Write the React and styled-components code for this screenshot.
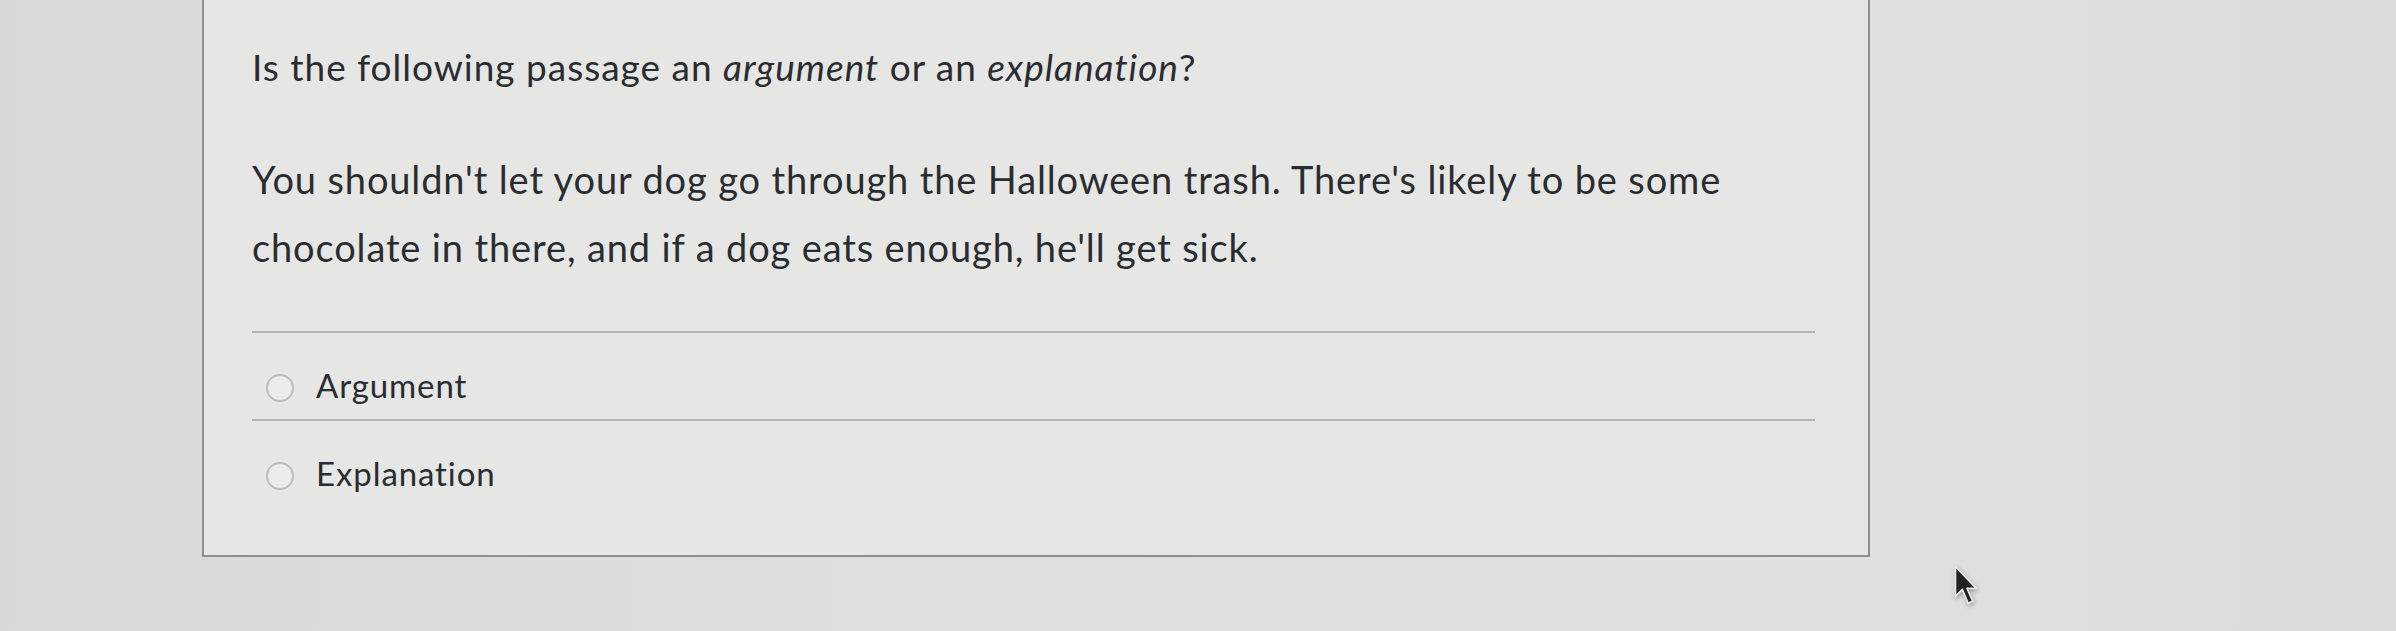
import React from "react";
import styled, { createGlobalStyle } from "styled-components";

const Global = createGlobalStyle`
  html, body { margin: 0; padding: 0; }
  body {
    background: #dbdbd9;
    font-family: Lato, "Open Sans", "Liberation Sans", sans-serif;
    color: #292d31;
  }
`;

const Page = styled.div`
  position: relative;
  width: 2396px;
  height: 631px;
  overflow: hidden;
  padding-left: 202px;
  box-sizing: border-box;
  background: linear-gradient(90deg, #d8d8d6 0%, #dfdfdd 40%, #e1e1df 75%, #dbdbd9 100%);
`;

const Card = styled.section`
  width: 1668px;
  box-sizing: border-box;
  background: #e6e6e4;
  border: 2px solid #8e8e8e;
  border-top: none;
  padding: 47px 53px 48px 48px;
`;

const Question = styled.p`
  margin: 0;
  font-size: 37px;
  letter-spacing: 1px;
  line-height: 40px;
  em { font-style: italic; }
`;

const Passage = styled.p`
  margin: 58px 0 0;
  font-size: 38px;
  letter-spacing: 0.87px;
  line-height: 68px;
`;

const Options = styled.div`
  margin-top: 50px;
  display: flex;
  flex-direction: column;
`;

const OptionRow = styled.label`
  display: flex;
  align-items: center;
  gap: 22px;
  border-top: 2px solid #b4b4b2;
  padding: 32px 0 14px 14px;
`;

const Radio = styled.span`
  width: 24px;
  height: 24px;
  border-radius: 50%;
  border: 2px solid #bdbdbb;
  background: #ebebe9;
  margin-top: 6px;
  flex: none;
`;

const OptionText = styled.span`
  font-size: 33px;
  letter-spacing: 0.9px;
  line-height: 40px;
`;

const Cursor = styled.svg`
  position: absolute;
  left: 1953px;
  top: 564px;
  width: 28px;
  height: 44px;
  filter: drop-shadow(1px 2px 2px rgba(0,0,0,0.3));
`;

export default function App() {
  return (
    <>
      <Global />
      <Page>
        <Card>
          <Question>
            Is the following passage an <em>argument</em> or an <em>explanation</em>?
          </Question>
          <Passage>
            You shouldn't let your dog go through the Halloween trash. There's likely to be some chocolate in there, and if a dog eats enough, he'll get sick.
          </Passage>
          <Options>
            <OptionRow>
              <Radio />
              <OptionText>Argument</OptionText>
            </OptionRow>
            <OptionRow>
              <Radio />
              <OptionText>Explanation</OptionText>
            </OptionRow>
          </Options>
        </Card>
        <Cursor viewBox="0 0 24 38">
          <path d="M2 2 L2 28 L8 22 L13 34 L17 32 L12 21 L20 21 Z" fill="#1f2326" stroke="#e8e8e8" strokeWidth="1.5" strokeLinejoin="round" />
        </Cursor>
      </Page>
    </>
  );
}
